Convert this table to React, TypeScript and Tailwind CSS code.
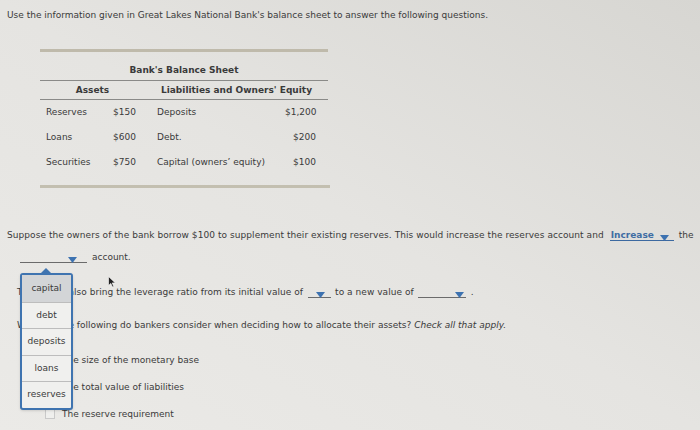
const ink = 'text-[#3a3a3a]';

function Caret() {
  return (
    <svg width="9" height="6" viewBox="0 0 9 6" className="inline-block">
      <path d="M0 0 L9 0 L4.5 6 Z" fill="#3d72b0" />
    </svg>
  );
}

function Blank({ width, arrowRight = 4 }: { width: number; arrowRight?: number }) {
  return (
    <span
      className="relative inline-block h-[12px] border-b-[1.5px] border-[#6b6b6b] align-top"
      style={{ width }}
    >
      <span className="absolute top-[2px]" style={{ right: arrowRight }}>
        <Caret />
      </span>
    </span>
  );
}

const rows = [
  ['Reserves', '$150', 'Deposits', '$1,200'],
  ['Loans', '$600', 'Debt.', '$200'],
  ['Securities', '$750', 'Capital (owners\u2019 equity)', '$100'],
];

const options = ['capital', 'debt', 'deposits', 'loans', 'reserves'];

export default function App() {
  return (
    <div
      className={`relative w-[700px] h-[430px] overflow-hidden bg-gradient-to-bl from-[#d7d6d2] via-[#e5e4e1] to-[#ebeae7] ${ink} text-[9px]`}
      style={{ fontFamily: '"DejaVu Sans", Verdana, sans-serif' }}
    >
      <p className="pt-[10px] pl-[7px] leading-[11px]">
        Use the information given in Great Lakes National Bank's balance sheet to answer the following questions.
      </p>

      {/* Balance sheet */}
      <div className="ml-[40px] mt-[28px] w-[288px]">
        <div className="h-[3px] bg-[#bfbaab]" />
        <div className="h-[28px] pt-[12px] text-center font-bold leading-[12px]">Bank's Balance Sheet</div>
        <div className="h-px bg-[#8a8a88]" />
        <div className="flex h-[18px] items-center pt-px font-bold">
          <div className="w-[105px] text-center">Assets</div>
          <div className="flex-1 text-center">Liabilities and Owners' Equity</div>
        </div>
        <div className="h-px bg-[#8a8a88]" />
        {rows.map((r) => (
          <div key={r[0]} className="flex h-[25px] items-center pl-[6px]">
            <div className="w-[66px]">{r[0]}</div>
            <div className="w-[24px] text-right">{r[1]}</div>
            <div className="ml-[21px] w-[128px]">{r[2]}</div>
            <div className="w-[31px] text-right">{r[3]}</div>
          </div>
        ))}
        <div className="mt-[10px] h-[3px] w-[290px] bg-[#c3bfb0]" />
      </div>

      {/* Questions */}
      <div className="pl-[7px]">
        <div className="mt-[41px] flex h-[12px] items-center leading-[12px] whitespace-nowrap tracking-[0.06px]">
          <span>
            Suppose the owners of the bank borrow $100 to supplement their existing reserves. This would increase the
            reserves account and
          </span>
          <span className="relative ml-[6px] inline-flex h-[12px] w-[64px] items-center border-b-[1.5px] border-[#3c69a0] pl-[1px] font-semibold tracking-normal text-[#3f6da3]">
            Increase
            <span className="absolute right-[5px] top-[2px]">
              <Caret />
            </span>
          </span>
          <span className="ml-[5px]">the</span>
        </div>

        <div className="mt-[10px] flex h-[12px] items-center pl-[13px] leading-[12px]">
          <Blank width={67} arrowRight={10} />
          <span className="ml-[5px]">account.</span>
        </div>

        <div className="mt-[23px] flex h-[12px] items-center pl-[10px] leading-[12px] whitespace-nowrap tracking-[0.05px]">
          <span>This would also bring the leverage ratio from its initial value of</span>
          <span className="ml-[5px]">
            <Blank width={23} arrowRight={6} />
          </span>
          <span className="ml-[4px]">to a new value of</span>
          <span className="ml-[4px]">
            <Blank width={48} arrowRight={2} />
          </span>
          <span className="ml-[5px]">.</span>
        </div>

        <div className="mt-[21px] flex h-[12px] items-center pl-[10px] leading-[12px] whitespace-nowrap">
          Which of the following do bankers consider when deciding how to allocate their assets?&nbsp;
          <i>Check all that apply.</i>
        </div>

        <div className="mt-[15px] flex flex-col">
          {['The size of the monetary base', 'The total value of liabilities', 'The reserve requirement'].map((t) => (
            <label key={t} className="flex h-[27px] items-center pl-[38px] leading-[12px]">
              <span className="h-[10px] w-[10px] border border-[#c9c9c9] bg-[#efefed]" />
              <span className="ml-[7px]">{t}</span>
            </label>
          ))}
        </div>
      </div>

      {/* Open dropdown menu */}
      <div className="absolute left-[20px] top-[273px] w-[53px] rounded-[3px] border-2 border-[#3f74b0] bg-[#f0f0ee] shadow-sm">
        <svg width="12" height="6" viewBox="0 0 12 6" className="absolute left-[18px] top-[-7px]">
          <path d="M0 6 L6 0 L12 6 Z" fill="#3f74b0" />
        </svg>
        {options.map((o, i) => (
          <div
            key={o}
            className={`flex h-[26.5px] items-center justify-center ${
              i === 0 ? 'bg-[#d3d5d7]' : 'border-t border-[#bdbdbd]'
            }`}
          >
            {o}
          </div>
        ))}
      </div>

      {/* Mouse pointer */}
      <svg width="8" height="12" viewBox="0 0 8 12" className="absolute left-[108px] top-[276px]">
        <path d="M0.5 0.5 L0.5 9.5 L2.8 7.4 L4.5 11 L5.8 10.4 L4.2 6.9 L7.3 6.9 Z" fill="#222" stroke="#fff" strokeWidth="0.6" />
      </svg>
    </div>
  );
}
